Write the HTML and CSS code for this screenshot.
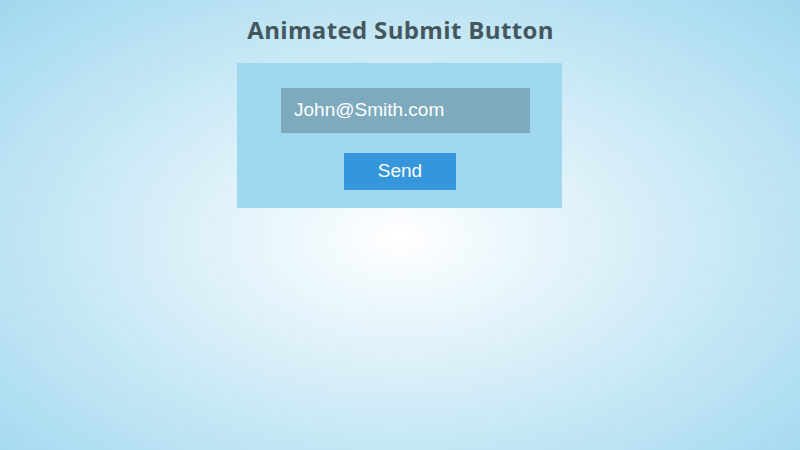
FILE: index.html
```html
<!DOCTYPE html>
<html>
<head>
<meta charset="utf-8">
<link rel="stylesheet" href="styles.css">
</head>
<body>
<div class="page">
  <h1 class="title">Animated Submit Button</h1>
  <form class="card">
    <input class="email" type="text" value="John@Smith.com">
    <button class="send" type="button">Send</button>
  </form>
</div>
</body>
</html>
```
FILE: styles.css
```css
html, body {
  margin: 0;
  height: 100%;
}
body {
  background: radial-gradient(ellipse at 50% 53%, #ffffff 0%, #a0d8ef 100%);
  background-color: #a0d8ef;
  font-family: "Liberation Sans", Arial, sans-serif;
}
.page {
  display: flex;
  flex-direction: column;
  align-items: center;
}
.title {
  margin: 14px 0 0;
  height: 49px;
  font-family: "Open Sans", sans-serif;
  font-weight: 700;
  font-size: 24px;
  line-height: 32px;
  color: #45575e;
  letter-spacing: 0.35px;
  padding-left: 1px;
}
.card {
  width: 325px;
  height: 145px;
  box-sizing: border-box;
  background: #a0d8ef;
  display: flex;
  flex-direction: column;
  align-items: center;
  padding-top: 25px;
  margin-left: -1px;
}
.email {
  width: 249px;
  height: 45px;
  box-sizing: border-box;
  border: none;
  outline: none;
  background: #7eaabe;
  color: #ffffff;
  font-family: "Liberation Sans", Arial, sans-serif;
  font-size: 19px;
  padding: 0 12px 1px 13px;
  margin: 0 0 0 12px;
}
.send {
  margin-top: 20px;
  width: 112px;
  height: 37px;
  border: none;
  background: #3596db;
  color: #ffffff;
  font-family: "Liberation Sans", Arial, sans-serif;
  font-size: 19px;
  padding: 0 0 1px;
  margin-left: 1px;
}
```
